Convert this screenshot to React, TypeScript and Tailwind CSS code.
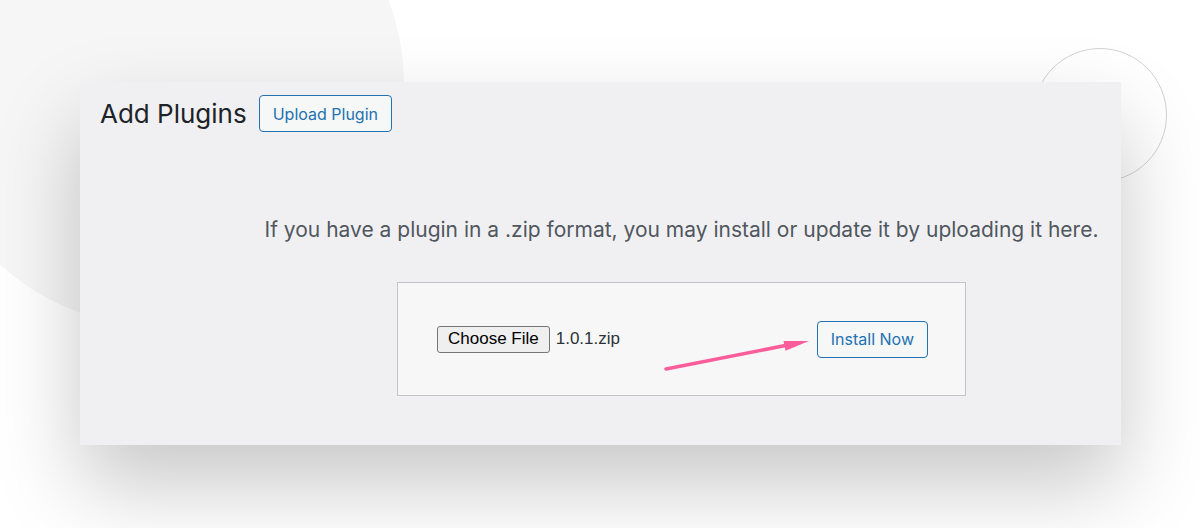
export default function App() {
  return (
    <div className="relative h-[528px] w-[1200px] overflow-hidden bg-white pl-[80px] pt-[82px] font-['Inter',sans-serif]">
      {/* backdrop shapes */}
      <div className="absolute left-[-80px] top-[-157px] h-[484px] w-[484px] rounded-full bg-[#f6f6f6]" />
      <div className="absolute left-[1033px] top-[48px] h-[134px] w-[134px] rounded-full border border-[#d2d2d2]" />

      <div className="relative h-[363px] w-[1041px] bg-[#f0f0f2] shadow-[0_40px_80px_rgba(0,0,0,0.22)]">
        <div className="flex items-center gap-3 pl-5 pt-[13px]">
          <h1 className="text-[26px] leading-[37px] text-[#1d2327]">Add Plugins</h1>
          <button className="h-[37px] rounded-[4px] border border-[#2271b1] bg-[#f6f7f7] px-[13px] text-[16px] text-[#2271b1]">
            Upload Plugin
          </button>
        </div>

        <div className="flex flex-col items-center pl-[162px]">
          <p className="mt-[85px] whitespace-nowrap text-[21px] leading-[26px] text-[#50575e]">
            If you have a plugin in a .zip format, you may install or update it by uploading it here.
          </p>

          <div className="mt-[39px] flex h-[114px] w-[569px] items-center justify-between border border-[#c3c4c7] bg-[#f7f7f7] pl-[39px] pr-[37px]">
            <div className="flex items-center gap-[6px] font-['Liberation_Sans',sans-serif]">
              <span className="flex h-[27px] items-center rounded-[3px] border border-[#767676] bg-[#efefef] px-[10px] text-[17px] text-black">
                Choose File
              </span>
              <span className="text-[17px] text-[#2c3338]">1.0.1.zip</span>
            </div>
            <button className="h-[37px] rounded-[4px] border border-[#2271b1] bg-[#f6f7f7] px-[13px] text-[16px] text-[#2271b1]">
              Install Now
            </button>
          </div>
        </div>
      </div>

      {/* annotation arrow */}
      <svg className="absolute left-0 top-0" width="1200" height="528" viewBox="0 0 1200 528">
        <line x1="666" y1="369" x2="788" y2="345" stroke="#fb5d9b" strokeWidth="3.5" strokeLinecap="round" />
        <polygon points="809,341 783.5,340.9 785.5,350.7" fill="#fb5d9b" />
      </svg>
    </div>
  );
}
